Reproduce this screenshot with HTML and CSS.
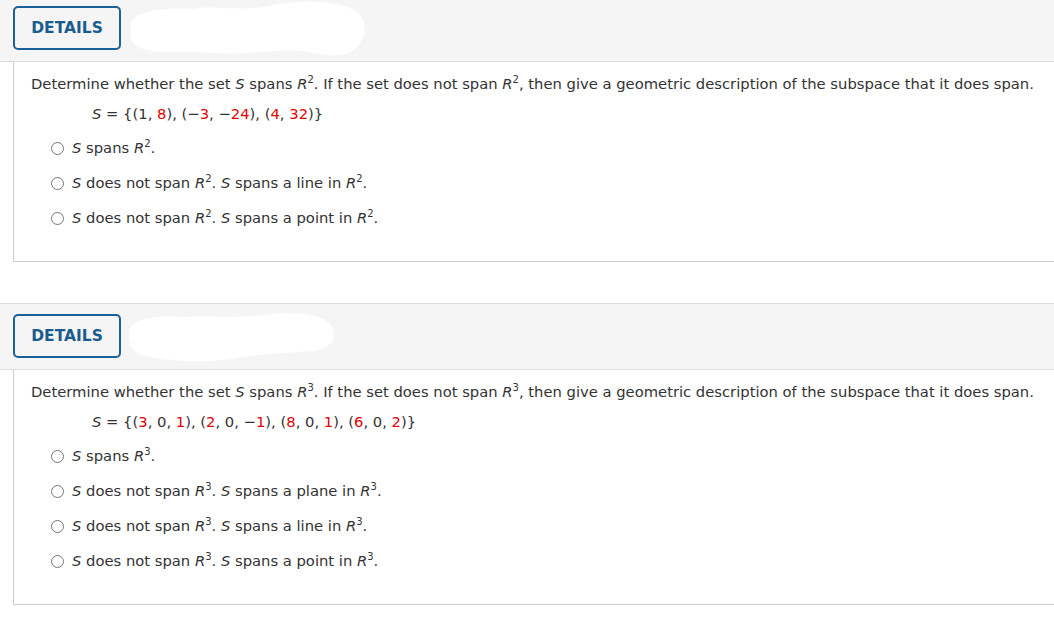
FILE: index.html
```html
<!DOCTYPE html>
<html>
<head>
<meta charset="utf-8">
<link rel="stylesheet" href="styles.css">
</head>
<body>
<div class="page">
  <section class="question first">
    <div class="qhead">
      <button class="details">DETAILS</button>
      <svg class="blob" width="250" height="60" viewBox="0 0 250 60"><path d="M8 30 C4 14 30 8 70 10 C90 6 110 12 140 8 C170 2 200 0 225 8 C248 16 244 40 232 50 C220 60 200 56 180 52 C150 50 120 56 95 54 C60 52 25 56 12 46 C6 40 8 36 8 30 Z" fill="#fff"/></svg>
    </div>
    <div class="qbody">
      <p class="prompt">Determine whether the set <i>S</i> spans <i>R</i><sup>2</sup>. If the set does not span <i>R</i><sup>2</sup>, then give a geometric description of the subspace that it does span.</p>
      <p class="set"><i>S</i> = {(1, <span class="r">8</span>), (&minus;<span class="r">3</span>, &minus;<span class="r">24</span>), (<span class="r">4</span>, <span class="r">32</span>)}</p>
      <ul class="options">
        <li><span class="radio"></span><span><i>S</i> spans <i>R</i><sup>2</sup>.</span></li>
        <li><span class="radio"></span><span><i>S</i> does not span <i>R</i><sup>2</sup>. <i>S</i> spans a line in <i>R</i><sup>2</sup>.</span></li>
        <li><span class="radio"></span><span><i>S</i> does not span <i>R</i><sup>2</sup>. <i>S</i> spans a point in <i>R</i><sup>2</sup>.</span></li>
      </ul>
    </div>
  </section>
  <section class="question">
    <div class="qhead">
      <button class="details">DETAILS</button>
      <svg class="blob" width="215" height="55" viewBox="0 0 215 55"><path d="M6 26 C4 10 30 6 60 8 C85 6 110 10 140 6 C170 2 198 4 208 16 C216 28 208 40 190 42 C165 44 140 44 110 50 C80 54 40 52 18 46 C8 42 6 34 6 26 Z" fill="#fff"/></svg>
    </div>
    <div class="qbody">
      <p class="prompt">Determine whether the set <i>S</i> spans <i>R</i><sup>3</sup>. If the set does not span <i>R</i><sup>3</sup>, then give a geometric description of the subspace that it does span.</p>
      <p class="set"><i>S</i> = {(<span class="r">3</span>, 0, <span class="r">1</span>), (<span class="r">2</span>, 0, &minus;<span class="r">1</span>), (<span class="r">8</span>, 0, <span class="r">1</span>), (<span class="r">6</span>, 0, <span class="r">2</span>)}</p>
      <ul class="options">
        <li><span class="radio"></span><span><i>S</i> spans <i>R</i><sup>3</sup>.</span></li>
        <li><span class="radio"></span><span><i>S</i> does not span <i>R</i><sup>3</sup>. <i>S</i> spans a plane in <i>R</i><sup>3</sup>.</span></li>
        <li><span class="radio"></span><span><i>S</i> does not span <i>R</i><sup>3</sup>. <i>S</i> spans a line in <i>R</i><sup>3</sup>.</span></li>
        <li><span class="radio"></span><span><i>S</i> does not span <i>R</i><sup>3</sup>. <i>S</i> spans a point in <i>R</i><sup>3</sup>.</span></li>
      </ul>
    </div>
  </section>
</div>
</body>
</html>
```

FILE: styles.css
```css
html, body {
  margin: 0;
  padding: 0;
  background: #fff;
}
body {
  font-family: "DejaVu Sans", Verdana, sans-serif;
  color: #333;
  overflow: hidden;
}
.page {
  display: flex;
  flex-direction: column;
  gap: 41px;
}
.question.first {
  margin-top: -5px;
}
.qhead {
  display: flex;
  align-items: center;
  height: 65px;
  background: #f5f5f5;
  border-top: 1px solid #dcdcdc;
  border-bottom: 1px solid #dcdcdc;
  padding-left: 13px;
  box-sizing: content-box;
}
.details {
  width: 108px;
  height: 44px;
  border: 2px solid #1b6199;
  border-radius: 5px;
  background: #f5f5f5;
  color: #1b5c8e;
  font-family: "DejaVu Sans", Verdana, sans-serif;
  font-weight: bold;
  font-size: 15.5px;
  letter-spacing: 0;
  padding: 0;
  margin-top: -2px;
}
.blob {
  display: block;
  margin-left: 2px;
}
.qbody {
  margin-left: 13px;
  border-left: 1px solid #cccccc;
  border-bottom: 1px solid #cccccc;
  padding: 11px 0 32px 17px;
  font-size: 14.75px;
}
.prompt {
  margin: 0;
  line-height: 22px;
  white-space: nowrap;
}
.set {
  margin: 8px 0 0 61px;
  line-height: 22px;
}
.r {
  color: #e60000;
}
sup {
  font-size: 10px;
  line-height: 0;
  vertical-align: 6px;
}
i {
  font-style: italic;
}
.options {
  list-style: none;
  margin: 12px 0 0 20px;
  padding: 0;
  display: flex;
  flex-direction: column;
  gap: 13px;
}
.options li {
  display: flex;
  align-items: center;
  gap: 8px;
  line-height: 22px;
}
.radio {
  width: 11px;
  height: 11px;
  border: 1px solid #767676;
  border-radius: 50%;
  background: #fff;
  flex: none;
}
```
